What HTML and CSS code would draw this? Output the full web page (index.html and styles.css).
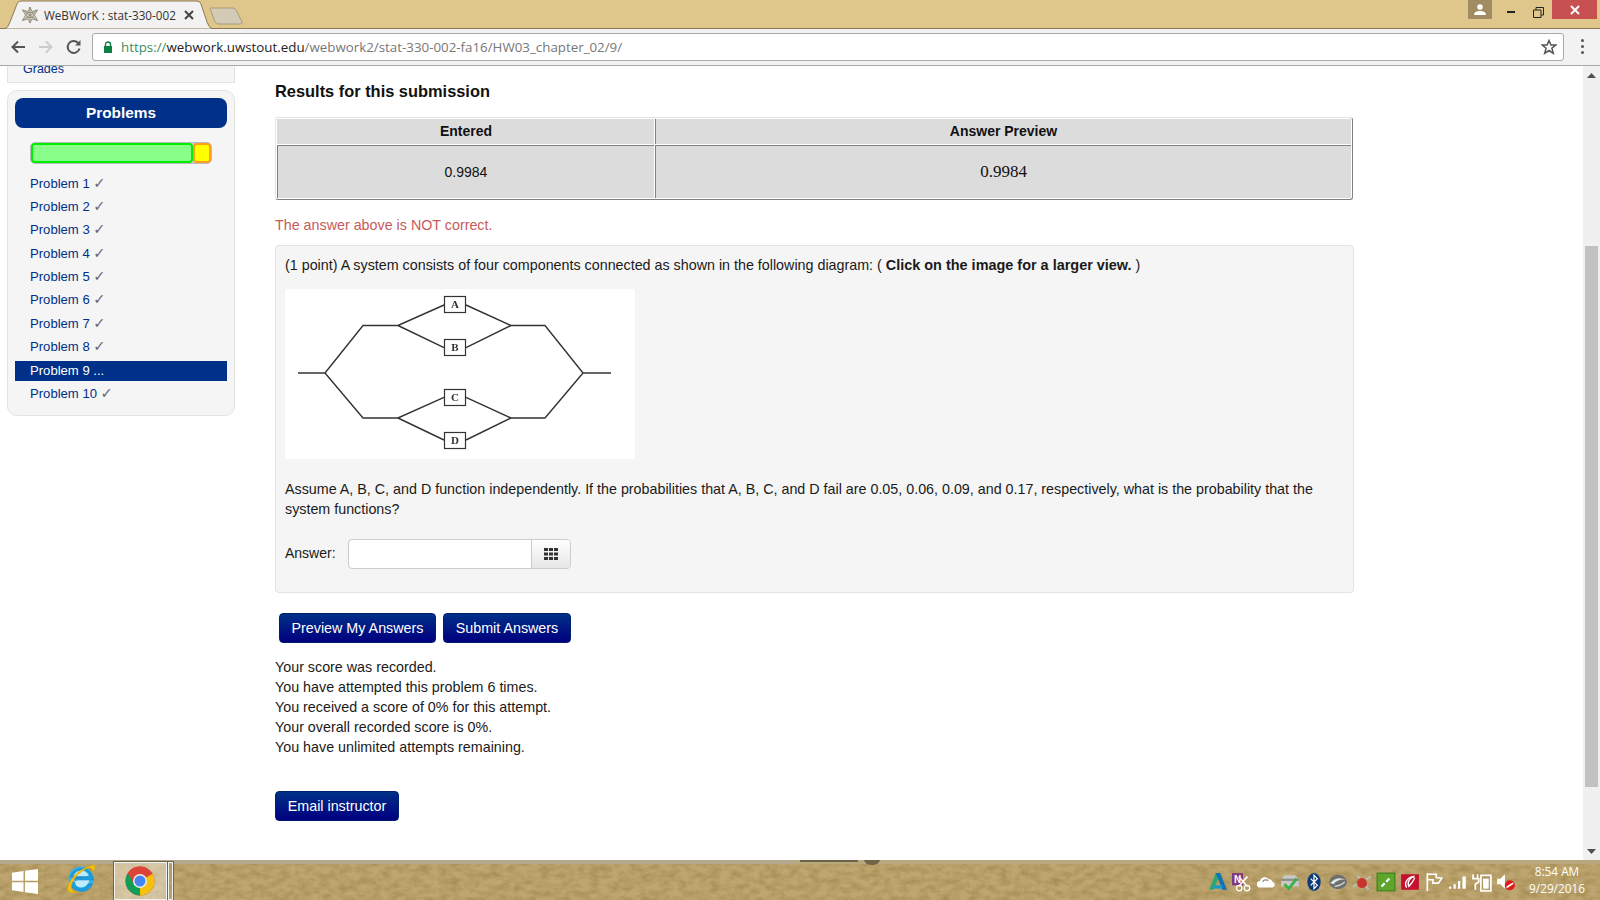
FILE: index.html
```html
<!DOCTYPE html>
<html lang="en">
<head>
<meta charset="utf-8">
<title>WeBWorK : stat-330-002</title>
<link rel="stylesheet" href="styles.css">
</head>
<body>
<header class="chrome">
  <div class="titlebar">
    <div class="tab">
      <svg class="tab-shape" width="212" height="29" viewBox="0 0 212 29"><path d="M0 28.500 H5 Q8 28 10 22 L17 4 Q18 1 21 1 H197 Q200 1 201 4 L207 22 Q209 28 212 28.500" fill="#f2f2f2" stroke="#8c7a55"/></svg>
      <svg class="favicon" width="18" height="18" viewBox="0 0 18 18"><path d="M9 1L11 5.500L16.500 4L13.500 9L16.500 14.500L11 13L9 17L7 13L1.500 14.500L4.500 9L1.500 4L7 5.500Z" fill="#d6d2c2" stroke="#8a8672" stroke-width=".8"/><path d="M9 1V17M1.500 4L16.500 14.500M16.500 4L1.500 14.500M6.500 6.500L11.500 6.500L13 9L11.500 11.500L6.500 11.500L5 9Z" stroke="#77735f" stroke-width=".6" fill="none"/></svg>
      <span class="tab-title">WeBWorK : stat-330-002</span>
      <svg class="tab-close" width="10" height="10" viewBox="0 0 10 10"><path d="M1 1L9 9M9 1L1 9" stroke="#444" stroke-width="2"/></svg>
    </div>
    <svg class="newtab" width="34" height="18" viewBox="0 0 34 18"><path d="M1 1.500 Q1 1 2 1 H24 Q26 1 27 3 L33 15 Q33.500 17 31 17 H9 Q7 17 6 15Z" fill="#d4cbb7" stroke="#a89a78"/></svg>
    <div class="window-controls">
      <div class="profile"><svg width="14" height="12" viewBox="0 0 14 12"><circle cx="7" cy="3" r="2.800" fill="#fff"/><path d="M1 11 Q1 7 7 7 Q13 7 13 11Z" fill="#fff"/></svg></div>
      <div class="win-btn"><svg width="10" height="4" viewBox="0 0 10 4"><rect y="1" width="8" height="2" fill="#222"/></svg></div>
      <div class="win-btn"><svg width="11" height="11" viewBox="0 0 11 11"><path d="M.5 3H8V10.500H.5Z M3 3V.5H10.500V8H8" fill="none" stroke="#222"/></svg></div>
      <div class="win-close"><svg width="10" height="10" viewBox="0 0 10 10"><path d="M1 1L9 9M9 1L1 9" stroke="#fff" stroke-width="2"/></svg></div>
    </div>
  </div>
  <div class="toolbar">
    <svg class="nav" width="16" height="16" viewBox="0 0 16 16"><path d="M15 8H3M8 2.500L2.500 8L8 13.500" fill="none" stroke="#555" stroke-width="2"/></svg>
    <svg class="nav" width="16" height="16" viewBox="0 0 16 16"><path d="M1 8H13M8 2.500L13.500 8L8 13.500" fill="none" stroke="#ccc" stroke-width="2"/></svg>
    <svg class="nav" width="16" height="16" viewBox="0 0 16 16"><path d="M13.500 9.500A6 6 0 1 1 12 3.800" fill="none" stroke="#555" stroke-width="2"/><path d="M14.500 1V6.500H9Z" fill="#555"/></svg>
    <div class="omnibox">
      <svg class="lock" width="10" height="12" viewBox="0 0 10 12"><path d="M2.500 5V3.500A2.500 2.500 0 0 1 7.500 3.500V5" fill="none" stroke="#0b8043" stroke-width="1.400"/><rect x="1" y="5" width="8" height="7" fill="#0b8043"/></svg>
      <span class="url"><span class="url-scheme">https://</span><span class="url-host">webwork.uwstout.edu</span>/webwork2/stat-330-002-fa16/HW03_chapter_02/9/</span>
      <svg class="star" width="16" height="16" viewBox="0 0 16 16"><path d="M8 1.500L9.900 6H14.800L10.900 9.200L12.300 14.300L8 11.500L3.700 14.300L5.100 9.200L1.200 6H6.100Z" fill="none" stroke="#555" stroke-width="1.500"/></svg>
    </div>
    <div class="menu-dots"><i></i><i></i><i></i></div>
  </div>
</header>

<div class="viewport">
  <div class="page">
    <aside class="sidebar">
      <div class="panel panel-clipped"><a class="grades">Grades</a></div>
      <nav class="panel panel-problems">
        <h2 class="panel-title">Problems</h2>
        <div class="progress"><div class="progress-done"></div><div class="progress-open"></div></div>
        <ul class="problem-list">
          <li><a>Problem 1 <span class="tick">✓</span></a></li>
          <li><a>Problem 2 <span class="tick">✓</span></a></li>
          <li><a>Problem 3 <span class="tick">✓</span></a></li>
          <li><a>Problem 4 <span class="tick">✓</span></a></li>
          <li><a>Problem 5 <span class="tick">✓</span></a></li>
          <li><a>Problem 6 <span class="tick">✓</span></a></li>
          <li><a>Problem 7 <span class="tick">✓</span></a></li>
          <li><a>Problem 8 <span class="tick">✓</span></a></li>
          <li class="active"><a>Problem 9 ...</a></li>
          <li><a>Problem 10 <span class="tick">✓</span></a></li>
        </ul>
      </nav>
    </aside>
    <main class="content">
      <h3 class="results-title">Results for this submission</h3>
      <table class="results">
        <tr><th class="col-entered">Entered</th><th>Answer Preview</th></tr>
        <tr><td class="col-entered">0.9984</td><td class="math">0.9984</td></tr>
      </table>
      <p class="error">The answer above is NOT correct.</p>
      <section class="problem">
        <p class="statement">(1 point) A system consists of four components connected as shown in the following diagram: ( <b>Click on the image for a larger view.</b> )</p>
        <svg class="diagram" width="350" height="170" viewBox="0 0 350 170">
          <path d="M13 84H40L78 36.500H113L159 16M113 36.500L159 58.700M181 16L226 36.500H260L298 84H326M181 58.700L226 36.500M40 84L78 129H113L159 108.300M113 129L159 151M181 108.300L226 129H260L298 84M181 151L226 129" fill="none" stroke="#333" stroke-width="1.400"/>
          <g fill="#fff" stroke="#333" stroke-width="1.200">
            <rect x="159.500" y="7.500" width="21" height="16"/>
            <rect x="159.500" y="50.500" width="21" height="16"/>
            <rect x="159.500" y="100.500" width="21" height="16"/>
            <rect x="159.500" y="143.500" width="21" height="16"/>
          </g>
          <g class="diagram-labels" text-anchor="middle">
            <text x="170" y="19">A</text>
            <text x="170" y="62">B</text>
            <text x="170" y="112">C</text>
            <text x="170" y="155">D</text>
          </g>
        </svg>
        <p class="question">Assume A, B, C, and D function independently. If the probabilities that A, B, C, and D fail are 0.05, 0.06, 0.09, and 0.17, respectively, what is the probability that the system functions?</p>
        <div class="answer-row">
          <label class="answer-label">Answer:</label>
          <div class="input-group">
            <div class="answer-input"></div>
            <div class="answer-addon"><svg width="14" height="12" viewBox="0 0 14 12"><path d="M0 0H4V3H0ZM5 0H9V3H5ZM10 0H14V3H10ZM0 4.500H4V7.500H0ZM5 4.500H9V7.500H5ZM10 4.500H14V7.500H10ZM0 9H4V12H0ZM5 9H9V12H5ZM10 9H14V12H10Z" fill="#333"/></svg></div>
          </div>
        </div>
      </section>
      <div class="actions">
        <button class="btn btn-preview">Preview My Answers</button>
        <button class="btn btn-submit">Submit Answers</button>
      </div>
      <div class="score">
        <div>Your score was recorded.</div>
        <div>You have attempted this problem 6 times.</div>
        <div>You received a score of 0% for this attempt.</div>
        <div>Your overall recorded score is 0%.</div>
        <div>You have unlimited attempts remaining.</div>
      </div>
      <button class="btn btn-email">Email instructor</button>
    </main>
  </div>
  <div class="scrollbar">
    <svg class="scroll-arrow" width="9" height="5" viewBox="0 0 9 5"><path d="M4.500 0L9 5H0Z" fill="#505050"/></svg>
    <div class="scroll-thumb"></div>
    <svg class="scroll-arrow" width="9" height="5" viewBox="0 0 9 5"><path d="M0 0H9L4.500 5Z" fill="#505050"/></svg>
  </div>
</div>

<footer class="taskbar">
  <svg class="texture" width="1600" height="40"><filter id="grain" x="0" y="0" width="100%" height="100%"><feTurbulence type="fractalNoise" baseFrequency=".1 .16" numOctaves="5" seed="11"/><feColorMatrix values="0 0 0 0 .30  0 0 0 0 .21  0 0 0 0 .06  1.100 0 0 0 -.36"/></filter><rect width="1600" height="40" filter="url(#grain)"/></svg>
  <div class="taskbar-edge"></div>
  <div class="dock-thumb"></div>
  <svg class="start" width="26" height="25" viewBox="0 0 26 25"><path d="M0 3.700L11.500 2V11.800H0ZM13 1.800L26 0V11.800H13ZM0 13.200H11.500V23L0 21.300ZM13 13.200H26V25L13 23.200Z" fill="#fff"/></svg>
  <svg class="ie" width="32" height="32" viewBox="0 0 32 32">
    <circle cx="16" cy="16" r="12.500" fill="#2fb4ea"/>
    <circle cx="16" cy="16" r="8.500" fill="#bfeafb"/>
    <path d="M7 15H25" stroke="#1d8fd1" stroke-width="3.500"/>
    <path d="M25 12A9 9 0 0 0 8 14H5A12 12 0 0 1 28.500 17H10A6.500 6.500 0 0 0 23 21H27.500A12 12 0 0 1 5 20" fill="#1d9ee0" stroke="#1781c5" stroke-width=".5"/>
    <path d="M3.500 28C0 24 9 10 18 6C24 3 29 1 30 3C31 5 28 8 27 9C28 5 26 4 21 6C11 11 4 21 7 27C8 29 11 29 13 28C9 31 5 30 3.500 28Z" fill="#f4c20d" stroke="#d69d00" stroke-width=".5"/>
  </svg>
  <div class="task-active">
    <svg width="30" height="30" viewBox="0 0 30 30">
      <circle cx="15" cy="15" r="14.500" fill="#db4437"/>
      <path d="M15 15L27.600 7.800A14.500 14.500 0 0 1 15 29.500Z" fill="#f4c20d"/>
      <path d="M15 15L15 29.500A14.500 14.500 0 0 1 2.400 7.800Z" fill="#0f9d58"/>
      <path d="M15 8H27.600A14.500 14.500 0 0 0 3 6.500L8.900 18.500Z" fill="#db4437"/>
      <circle cx="15" cy="15" r="7" fill="#f1ecdf"/>
      <circle cx="15" cy="15" r="5.500" fill="#4285f4"/>
    </svg>
  </div>
  <div class="task-sliver"></div>
  <div class="tray">
    <svg width="20" height="20" viewBox="0 0 18 18"><path d="M7 1H11L5 16H1Z" fill="#2aa76d"/><path d="M7 1H11L17 16H13Z" fill="#0f72b8"/><path d="M5 12H13V15H5Z" fill="#1a98c9"/></svg>
    <svg width="20" height="20" viewBox="0 0 18 18"><rect y="1" width="10" height="11" fill="#80397b"/><text class="tray-n" x="5" y="10" text-anchor="middle">N</text><path d="M6 4L14 13M14 4L6 13" stroke="#fff" stroke-width="1.400"/><circle cx="6.500" cy="14.500" r="2.500" fill="none" stroke="#fff" stroke-width="1.200"/><circle cx="13.500" cy="14.500" r="2.500" fill="none" stroke="#fff" stroke-width="1.200"/></svg>
    <svg width="20" height="20" viewBox="0 0 18 18"><path d="M4 14A3 3 0 0 1 3.500 8A4.500 4.500 0 0 1 11.500 6.500A3.500 3.500 0 0 1 15 9A2.600 2.600 0 0 1 15 14Z" fill="#fff"/><path d="M6 9A3 3 0 0 1 11 8" stroke="#888" fill="none"/></svg>
    <svg width="20" height="20" viewBox="0 0 18 18"><path d="M1 7L4 3H14L17 7V13H1Z" fill="#c8c8c4"/><rect x="1" y="6" width="16" height="2" fill="#8c8c88"/><path d="M4 11L8 15L15 6" fill="none" stroke="#37b34a" stroke-width="2.500"/></svg>
    <svg width="20" height="20" viewBox="0 0 18 18"><ellipse cx="9" cy="9" rx="6" ry="8" fill="#0a3a78"/><path d="M6 6L12 12L9 15V3L12 6L6 12" fill="none" stroke="#fff" stroke-width="1.100"/></svg>
    <svg width="20" height="20" viewBox="0 0 18 18"><ellipse cx="9" cy="9" rx="8" ry="6.500" fill="#6c6f70"/><path d="M2 10Q8 3 16 7Q9 6 5 11" fill="#e4e4e0"/><path d="M6 13Q12 12 15 9" stroke="#d8d8d4" fill="none" stroke-width="1.200"/></svg>
    <svg width="20" height="20" viewBox="0 0 18 18"><path d="M1 13L7 10M17 4L11 8M15 16L11 11M5 3L8 8" stroke="#bdbcb0" stroke-width="2"/><circle cx="9" cy="10" r="4.500" fill="#c9342c"/></svg>
    <svg width="20" height="20" viewBox="0 0 18 18"><rect x="1" y="1" width="16" height="16" fill="#5ea52c" stroke="#3f7d1c"/><path d="M5 13L13 5" stroke="#fff" stroke-width="2" stroke-dasharray="4 2"/></svg>
    <svg width="20" height="20" viewBox="0 0 18 18"><rect x="1" y="2" width="16" height="14" fill="#c4112f"/><path d="M6 14C3 9 8 4 13 4C9 5 6 9 8 13C10 10 13 8 13 5" fill="none" stroke="#fff" stroke-width="1.200"/></svg>
    <svg width="20" height="20" viewBox="0 0 18 18"><path d="M3 1V17M3 2H11V5L16 5.500L13 10H8V7H3" fill="none" stroke="#fff" stroke-width="1.500"/></svg>
    <svg width="20" height="20" viewBox="0 0 18 18"><path d="M1 13H3V15H1ZM5 11H7V15H5ZM9 8H11V15H9ZM13 4H16V15H13Z" fill="#fff"/></svg>
    <svg width="20" height="20" viewBox="0 0 18 18"><rect x="8" y="3" width="9" height="14" fill="none" stroke="#fff" stroke-width="1.500"/><rect x="10" y="6" width="5" height="9" fill="#fff"/><path d="M1 2V6M5 2V6M0 6H6V9L3 11V16" fill="none" stroke="#fff" stroke-width="1.500"/></svg>
    <svg width="20" height="20" viewBox="0 0 18 18"><path d="M1 6H4L8 2V15L4 11H1Z" fill="#fff"/><circle cx="12.500" cy="12" r="4.500" fill="#e01b1b"/><path d="M9.500 14L15.500 10" stroke="#fff" stroke-width="1.500"/></svg>
  </div>
  <div class="clock"><span>8:54 AM</span><span>9/29/2016</span></div>
</footer>
</body>
</html>
```

FILE: styles.css
```css
* { box-sizing: border-box; }
html, body { margin: 0; height: 900px; overflow: hidden; }
body { display: flex; flex-direction: column; width: 1600px; background: #fff; font-family: "Liberation Sans", Arial, sans-serif; font-size: 14px; color: #222; }
h2, h3, p, ul { margin: 0; padding: 0; }

/* browser chrome */
.chrome { flex: none; height: 66px; }
.titlebar { display: flex; height: 29px; background: #dfc68a; border-bottom: 1px solid #8c7a55; position: relative; }
.tab { position: relative; width: 212px; height: 29px; display: flex; align-items: center; padding: 0 0 0 21px; flex: none; }
.tab-shape { position: absolute; left: 0; top: 0; }
.favicon, .tab-title, .tab-close { position: relative; }
.favicon { flex: none; }
.tab-title { margin-left: 5px; width: 131px; white-space: nowrap; font-family: "Open Sans", sans-serif; font-size: 11.700px; color: #333; }
.tab-close { margin-left: 9px; flex: none; }
.newtab { flex: none; margin: 7px 0 0 -3px; }
.window-controls { margin-left: auto; display: flex; height: 19px; margin-right: 3px; align-items: center; }
.profile { width: 24px; height: 19px; background: #a08c60; display: flex; align-items: center; justify-content: center; margin-right: 7px; }
.win-btn { width: 26px; height: 19px; display: flex; align-items: center; justify-content: center; padding-top: 5px; }
.win-close { width: 45px; height: 19px; background: #c75050; display: flex; align-items: center; justify-content: center; margin-left: 1px; }
.toolbar { height: 37px; background: #f2f2f2; border-bottom: 1px solid #aaa; display: flex; align-items: center; padding: 0 0 1px 10px; }
.nav { flex: none; margin-right: 12px; }
.nav:nth-child(3) { margin-right: 10px; }
.omnibox { width: 1472px; height: 28px; background: #fff; border: 1px solid #aaa; border-radius: 3px; display: flex; align-items: center; padding: 0 6px 0 10px; }
.lock { flex: none; }
.url { margin-left: 8px; font-family: "Open Sans", sans-serif; font-size: 13.330px; color: #777; white-space: nowrap; }
.url-scheme { color: #3d8c5f; }
.url-host { color: #222; }
.star { margin-left: auto; }
.menu-dots { margin-left: 17px; display: flex; flex-direction: column; gap: 3px; }
.menu-dots i { width: 3px; height: 3px; background: #555; border-radius: 50%; }

/* page */
.viewport { flex: none; height: 794px; display: flex; overflow: hidden; }
.page { flex: 1; display: flex; overflow: hidden; }
.sidebar { flex: none; width: 228px; margin-left: 7px; }
.panel { background: #f5f5f5; border: 1px solid #e3e3e3; }
.panel-clipped { height: 17px; border-top: 0; display: flex; align-items: flex-end; padding: 0 0 7px 15px; line-height: 12px; }
.grades { color: #003087; font-size: 12.500px; }
.panel-problems { margin-top: 7px; height: 326px; border-radius: 10px; padding: 7px; }
.panel-title { height: 30px; background: #003087; color: #fff; border-radius: 8px; text-align: center; font-size: 15.400px; line-height: 30px; font-weight: 700; }
.progress { display: flex; width: 182px; height: 22px; margin: 14px 0 0 15px; border: 1px solid #bbb; border-radius: 5px; background: #ccc; }
.progress-done { width: 162px; height: 20px; background: #88ff88; border: 2px solid #00ee00; border-radius: 4px; }
.progress-open { flex: 1; height: 20px; background: #ffff00; border: 2px solid #ff9f1c; border-radius: 4px; }
.problem-list { list-style: none; margin-top: 9.500px; }
.problem-list li { height: 20px; margin-bottom: 3.400px; padding-left: 15px; line-height: 20px; color: #003087; font-size: 13.100px; }
.tick { color: #667; font-family: "DejaVu Sans", sans-serif; font-size: 14.500px; line-height: 14px; }
.problem-list .active { background: #003087; color: #fff; }

.content { flex: none; width: 1080px; margin-left: 40px; padding-top: 15px; }
.results-title { font-size: 16.400px; line-height: 20px; color: #111; }
.results { margin: 16px 0 0 0; width: 1078px; height: 83px; border-collapse: separate; border-spacing: 1px; border: 1px solid; border-color: #e4e4e4 #808080 #808080 #e4e4e4; border-radius: 3px; table-layout: fixed; }
.results th, .results td { background: #dcdcdc; text-align: center; padding: 0; font-size: 14px; color: #111; border-style: solid; border-width: 0; }
.results th { height: 25px; padding-bottom: 2px; border-left: 1px solid #808080; }
.results th.col-entered { border-left-color: #dcdcdc; }
.results td { border-top: 1px solid #808080; border-left: 1px solid #808080; }
.col-entered { width: 377px; }
.results .math { font-family: "Liberation Serif", serif; font-size: 17px; }
.error { margin-top: 15px; line-height: 20px; color: #c85a5a; font-size: 14.300px; }
.problem { margin-top: 10px; width: 1079px; height: 348px; background: #f5f5f5; border: 1px solid #e3e3e3; border-radius: 4px; padding: 9px; line-height: 20px; font-size: 14.300px; color: #1a1a1a; }
.statement b { font-size: 14.450px; }
.diagram { display: block; margin-top: 14px; background: #fff; filter: blur(.3px); }
.diagram-labels { font-family: "Liberation Serif", serif; font-size: 11px; font-weight: 700; fill: #333; }
.question { margin-top: 20px; }
.answer-row { display: flex; align-items: center; margin-top: 20px; }
.answer-label { width: 63px; font-size: 14px; padding-bottom: 2px; }
.input-group { display: flex; height: 30px; width: 223px; border: 1px solid #ccc; border-radius: 4px; background: #fff; }
.answer-input { width: 183px; border-right: 1px solid #ccc; }
.answer-addon { flex: 1; display: flex; align-items: center; justify-content: center; background: linear-gradient(#fff, #e6e6e6); border-radius: 0 3px 3px 0; }

.actions { margin: 20px 0 0 4px; display: flex; gap: 7px; }
.btn { height: 30px; border: 1px solid #00206e; border-radius: 4px; background: linear-gradient(#003087, #000080); color: #fff; font: 14.300px "Liberation Sans", Arial, sans-serif; padding: 0; display: block; }
.btn-preview { width: 157px; }
.btn-submit { width: 128px; }
.btn-email { width: 124px; margin-top: 34px; }
.score { margin-top: 14px; line-height: 20px; font-size: 14.300px; color: #1a1a1a; }

.scrollbar { flex: none; width: 17px; background: #f0f0f0; display: flex; flex-direction: column; align-items: center; padding-top: 7px; }
.scroll-arrow { flex: none; }
.scroll-thumb { width: 13px; height: 541px; margin: 168px 0 62px; background: #c1c1c1; }

/* windows taskbar */
.taskbar { flex: none; height: 40px; position: relative; background: #bfa670; display: flex; align-items: center; overflow: hidden; padding-left: 12px; }
.texture { position: absolute; left: 0; top: 0; }
.taskbar-edge { position: absolute; left: 0; top: 0; width: 100%; height: 4px; background: linear-gradient(90deg, #b3a78c 0 795px, #b9a77e 795px); }
.dock-thumb { position: absolute; left: 800px; top: 0; width: 58px; height: 2px; background: #6f6348; }
.dock-thumb::after { content: ""; position: absolute; left: 64px; top: -6px; width: 16px; height: 11px; background: #6f6348; border-radius: 50%; }
.start, .ie, .task-active, .task-sliver, .tray, .clock { position: relative; }
.start { flex: none; margin-top: 2px; }
.ie { flex: none; margin: 0 0 2px 27px; }
.task-active { flex: none; width: 53px; height: 38px; margin: 2px 0 0 17px; padding-right: 2px; border: 1px solid #f2f2f2; outline: 1px solid #6f6348; background: rgba(255, 255, 255, .38); display: flex; align-items: center; justify-content: center; }
.task-sliver { flex: none; width: 5px; height: 38px; margin-top: 2px; border: 1px solid #f2f2f2; outline: 1px solid #6f6348; margin-left: 1px; }
.tray { margin-left: auto; display: flex; gap: 4px; padding-top: 3px; }
.tray-n { font-family: "Liberation Sans", sans-serif; font-weight: 700; font-size: 9px; fill: #fff; }
.clock { width: 84px; padding: 0 2px 0 0; display: flex; flex-direction: column; align-items: center; color: #fff; font-family: "Open Sans", sans-serif; font-size: 11.800px; line-height: 17px; }
```
